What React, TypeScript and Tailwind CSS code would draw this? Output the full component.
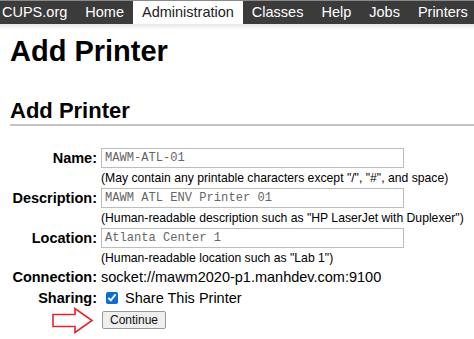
import React from "react";

const navItems = ["CUPS.org", "Home", "Administration", "Classes", "Help", "Jobs", "Printers"];

function Arrow() {
  return (
    <svg width="42" height="27" viewBox="0 0 42 27" className="block">
      <path
        d="M1 7.5 L23 7.5 L23 1.5 L40 13.5 L23 25.5 L23 19.5 L1 19.5 Z"
        fill="none"
        stroke="#e3262d"
        strokeWidth="1.6"
        strokeLinejoin="miter"
      />
    </svg>
  );
}

function FieldInput({ value }: { value: string }) {
  return (
    <div className="w-[303px] h-[20px] border border-[#bdbdbd] bg-white pl-[3px] flex items-center text-[12.1px] text-[#666] font-['Liberation_Mono',monospace] leading-none">
      {value}
    </div>
  );
}

export default function App() {
  return (
    <div className="w-[474px] h-[339px] bg-white overflow-hidden font-['Liberation_Sans',Arial,sans-serif] text-black">
      {/* Nav */}
      <div className="h-[24px] bg-[#3b3b3b] border-t border-[#8a8a8a] flex items-stretch text-[14.5px] leading-none text-white whitespace-nowrap">
        {navItems.map((item, i) => (
          <div
            key={item}
            className={
              (i === 0 ? "pl-[2px] pr-[9px] " : "px-[9px] ") +
              "flex items-center " +
              (item === "Administration" ? "bg-white text-[#222]" : "")
            }
          >
            {item}
          </div>
        ))}
      </div>
      <div className="h-[6px] bg-gradient-to-b from-[#e6e6e6] to-white" />

      {/* h1 */}
      <div className="pl-[10px] mt-[7px] text-[29px] leading-[29px] font-bold">Add Printer</div>

      {/* h2 */}
      <div className="ml-[10px] mt-[34px] border-b-2 border-[#c4c4c4] pb-[2px]">
        <div className="text-[22px] leading-[22px] font-bold">Add Printer</div>
      </div>

      {/* Form */}
      <div className="mt-[21px] grid grid-cols-[97px_1fr] gap-x-[4px] text-[14.5px] leading-none">
        <div className="h-[22px] flex items-center justify-end font-bold">Name:</div>
        <div className="h-[22px] flex items-center"><FieldInput value="MAWM-ATL-01" /></div>
        <div />
        <div className="h-[18px] flex items-center text-[12.2px] whitespace-nowrap">(May contain any printable characters except "/", "#", and space)</div>

        <div className="h-[22px] flex items-center justify-end font-bold">Description:</div>
        <div className="h-[22px] flex items-center"><FieldInput value="MAWM ATL ENV Printer 01" /></div>
        <div />
        <div className="h-[18px] flex items-center text-[12.2px] whitespace-nowrap">(Human-readable description such as "HP LaserJet with Duplexer")</div>

        <div className="h-[22px] flex items-center justify-end font-bold">Location:</div>
        <div className="h-[22px] flex items-center"><FieldInput value="Atlanta Center 1" /></div>
        <div />
        <div className="h-[18px] flex items-center text-[12.2px] whitespace-nowrap">(Human-readable location such as "Lab 1")</div>

        <div className="h-[21px] flex items-center justify-end font-bold">Connection:</div>
        <div className="h-[21px] flex items-center whitespace-nowrap">socket://mawm2020-p1.manhdev.com:9100</div>

        <div className="h-[20px] flex items-center justify-end font-bold">Sharing:</div>
        <div className="h-[20px] flex items-center whitespace-nowrap">
          <input type="checkbox" defaultChecked className="w-[12px] h-[12px] ml-[5px] mr-[7px] accent-[#0a6cd6]" />
          <span>Share This Printer</span>
        </div>

        <div className="h-[24px] flex items-center justify-end pr-[3px]"><Arrow /></div>
        <div className="h-[24px] flex items-center">
          <div className="ml-[1px] h-[18px] w-[64px] border border-[#9a9a9a] rounded-[2px] bg-[#efefef] flex items-center justify-center text-[12px] leading-none text-[#111]">
            Continue
          </div>
        </div>
      </div>
    </div>
  );
}
